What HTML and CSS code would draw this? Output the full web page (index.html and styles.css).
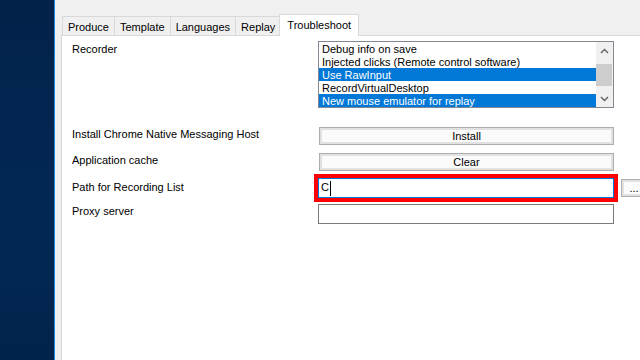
FILE: index.html
```
<!DOCTYPE html>
<html>
<head>
<meta charset="utf-8">
<link rel="stylesheet" href="styles.css">
</head>
<body>
<div class="screen">
  <div class="desktop"></div>
  <div class="window">
    <div class="tabs">
      <div class="tab">Produce</div>
      <div class="tab">Template</div>
      <div class="tab">Languages</div>
      <div class="tab">Replay</div>
      <div class="tab selected">Troubleshoot</div>
    </div>
    <div class="panel">
      <div class="row row-recorder">
        <div class="label">Recorder</div>
        <div class="listbox">
          <div class="items">
            <div class="item">Debug info on save</div>
            <div class="item">Injected clicks (Remote control software)</div>
            <div class="item sel">Use RawInput</div>
            <div class="item">RecordVirtualDesktop</div>
            <div class="item sel">New mouse emulator for replay</div>
          </div>
          <div class="scrollbar">
            <div class="arrow"><svg width="9" height="6" viewBox="0 0 9 6"><polyline points="1,5 4.5,1.5 8,5" fill="none" stroke="#606060" stroke-width="1.4"/></svg></div>
            <div class="track"><div class="thumb"></div></div>
            <div class="arrow"><svg width="9" height="6" viewBox="0 0 9 6"><polyline points="1,1 4.5,4.5 8,1" fill="none" stroke="#606060" stroke-width="1.4"/></svg></div>
          </div>
        </div>
      </div>
      <div class="row row-install">
        <div class="label">Install Chrome Native Messaging Host</div>
        <div class="button wide">Install</div>
      </div>
      <div class="row row-cache">
        <div class="label">Application cache</div>
        <div class="button wide">Clear</div>
      </div>
      <div class="row row-path">
        <div class="label label-path">Path for Recording List</div>
        <div class="textbox focused">C<span class="caret"></span></div>
        <div class="button browse">...</div>
      </div>
      <div class="row row-proxy">
        <div class="label">Proxy server</div>
        <div class="textbox"></div>
      </div>
    </div>
  </div>
</div>
</body>
</html>
```
FILE: styles.css
```
html, body {
  margin: 0;
  width: 640px;
  height: 360px;
  overflow: hidden;
}
body {
  font-family: "Liberation Sans", Arial, sans-serif;
  font-size: 11px;
  line-height: 13px;
  color: #000;
  background: #f0f0f0;
}
.screen {
  display: flex;
  height: 360px;
}
.desktop {
  width: 54px;
  flex: none;
  background: linear-gradient(180deg, #03224a 0%, #022651 40%, #022852 70%, #01234b 100%);
  border-right: 1px solid #1c8be6;
}
.window {
  flex: 1;
  min-width: 0;
  background: #f0f0f0;
  padding-left: 6px;
  display: flex;
  flex-direction: column;
}
.tabs {
  display: flex;
  align-items: flex-end;
  margin-top: 14px;
  padding-left: 1px;
  height: 21px;
  position: relative;
  z-index: 1;
}
.tab {
  box-sizing: border-box;
  height: 19px;
  padding: 4px 5px 0 5px;
  border: 1px solid #d9d9d9;
  border-bottom: none;
  margin-left: -1px;
  background: #f0f0f0;
  white-space: nowrap;
}
.tab:first-child {
  margin-left: 0;
}
.tab.selected {
  height: 22px;
  margin-left: -2px;
  margin-bottom: -1px;
  padding: 4px 7px 0 7px;
  background: #fff;
  position: relative;
}
.panel {
  flex: 1;
  background: #fff;
  border-top: 1px solid #d9d9d9;
  border-left: 1px solid #d9d9d9;
  padding: 5px 0 0 10px;
  display: flex;
  flex-direction: column;
}
.row {
  display: flex;
  align-items: flex-start;
}
.label {
  width: 246px;
  flex: none;
  padding-top: 2px;
  white-space: nowrap;
}
.row-install .label,
.row-cache .label,
.row-proxy .label {
  padding-top: 1px;
}
.label-path {
  padding-top: 3px;
}
.listbox {
  box-sizing: border-box;
  width: 296px;
  height: 67px;
  border: 1px solid #828790;
  display: flex;
}
.items {
  flex: 1;
  min-width: 0;
}
.item {
  height: 12px;
  padding: 1px 0 0 3px;
  line-height: 12px;
  white-space: nowrap;
}
.item.sel {
  background: #0078d7;
  color: #fff;
}
.scrollbar {
  width: 17px;
  flex: none;
  background: #f0f0f0;
  display: flex;
  flex-direction: column;
}
.arrow {
  height: 17px;
  display: flex;
  align-items: center;
  justify-content: center;
}
.track {
  flex: 1;
}
.thumb {
  margin: 5px 1px 0 0;
  height: 22px;
  background: #cdcdcd;
}
.row-install {
  margin-top: 19px;
}
.row-cache {
  margin-top: 8px;
}
.row-path {
  margin-top: 7px;
}
.row-proxy {
  margin-top: 6px;
}
.button {
  box-sizing: border-box;
  height: 18px;
  border: 1px solid #adadad;
  box-shadow: inset 0 0 0 2px #e1e1e1;
  background: #fbfbfb;
  text-align: center;
  padding-top: 1px;
  line-height: 15px;
  white-space: nowrap;
}
.button.wide {
  width: 295px;
  margin-left: 1px;
}
.button.browse {
  width: 26px;
  flex: none;
  margin-left: 7px;
  margin-top: 1px;
  line-height: 14px;
}
.textbox {
  box-sizing: border-box;
  width: 296px;
  height: 20px;
  flex: none;
  border: 1px solid #7a7a7a;
  padding: 2px 0 0 2px;
  display: flex;
  align-items: flex-start;
}
.textbox.focused {
  border-color: #0078d7;
  outline: 4px solid #ff0000;
}
.caret {
  display: inline-block;
  width: 1px;
  height: 15px;
  margin-left: 1px;
  background: #000;
}
```
